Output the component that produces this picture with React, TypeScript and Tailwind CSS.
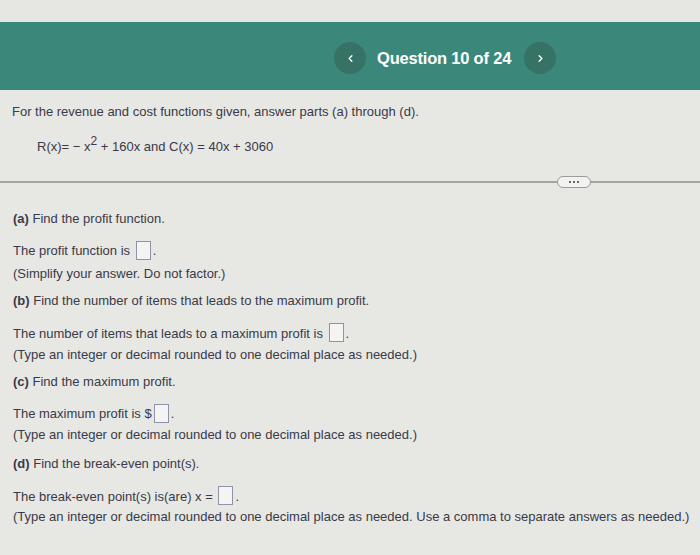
import React from "react";
import { ChevronLeft, ChevronRight } from "lucide-react";

const Box = () => (
  <span className="inline-block w-[15px] h-[19px] border-[1.5px] border-[#8e92aa] bg-[#f4f4f2] align-middle mx-[2px] -mt-[3px]" />
);

export default function App() {
  return (
    <div
      className="w-[700px] h-[555px] overflow-hidden bg-[#e7e7e4] text-[#3a3a48]"
      style={{ fontFamily: '"Liberation Sans", Arial, sans-serif' }}
    >
      <div className="h-[22px] bg-[#e6e6e2]" />
      <div className="h-[68px] bg-[#3b887b] flex items-center pl-[334px] pt-[4px]">
        <div className="w-[32px] h-[32px] rounded-full bg-[#367266] flex items-center justify-center text-white">
          <ChevronLeft size={11} strokeWidth={3} />
        </div>
        <div className="ml-[11px] text-white font-bold text-[16.5px] tracking-[-0.2px]">
          Question 10 of 24
        </div>
        <div className="ml-[13px] w-[32px] h-[32px] rounded-full bg-[#367266] flex items-center justify-center text-white">
          <ChevronRight size={11} strokeWidth={3} />
        </div>
      </div>

      <div className="pl-[12px] pt-[14px] text-[13px] leading-[16px]">
        For the revenue and cost functions given, answer parts (a) through (d).
      </div>
      <div className="pl-[37px] pt-[17px] text-[13px] leading-[20px]">
        R(x)= − x<span className="inline-block text-[12px] relative -top-[6px] leading-[12px]">2</span> + 160x and C(x) = 40x + 3060
      </div>

      <div className="relative mt-[24px] h-[2px] bg-[#a3a3a3]">
        <div className="absolute left-[557px] -top-[5px] w-[34px] h-[12px] rounded-full border border-[#9a9a9a] bg-[#f2f2f0] flex items-center justify-center gap-[2px]">
          <span className="w-[2px] h-[2px] bg-[#666]" />
          <span className="w-[2px] h-[2px] bg-[#666]" />
          <span className="w-[2px] h-[2px] bg-[#666]" />
        </div>
      </div>

      <div className="pl-[13px] pt-[28px] text-[13px] leading-[16px] flex flex-col">
        <div><b>(a)</b> Find the profit function.</div>
        <div className="mt-[16px]">The profit function is <Box />.</div>
        <div className="mt-[6px]">(Simplify your answer. Do not factor.)</div>
        <div className="mt-[11px]"><b>(b)</b> Find the number of items that leads to the maximum profit.</div>
        <div className="mt-[17px]">The number of items that leads to a maximum profit is <Box />.</div>
        <div className="mt-[5px]">(Type an integer or decimal rounded to one decimal place as needed.)</div>
        <div className="mt-[11px]"><b>(c)</b> Find the maximum profit.</div>
        <div className="mt-[16px]">The maximum profit is $<Box />.</div>
        <div className="mt-[4px]">(Type an integer or decimal rounded to one decimal place as needed.)</div>
        <div className="mt-[13px]"><b>(d)</b> Find the break-even point(s).</div>
        <div className="mt-[17px]">The break-even point(s) is(are) x = <Box />.</div>
        <div className="mt-[4px]">(Type an integer or decimal rounded to one decimal place as needed. Use a comma to separate answers as needed.)</div>
      </div>
    </div>
  );
}
